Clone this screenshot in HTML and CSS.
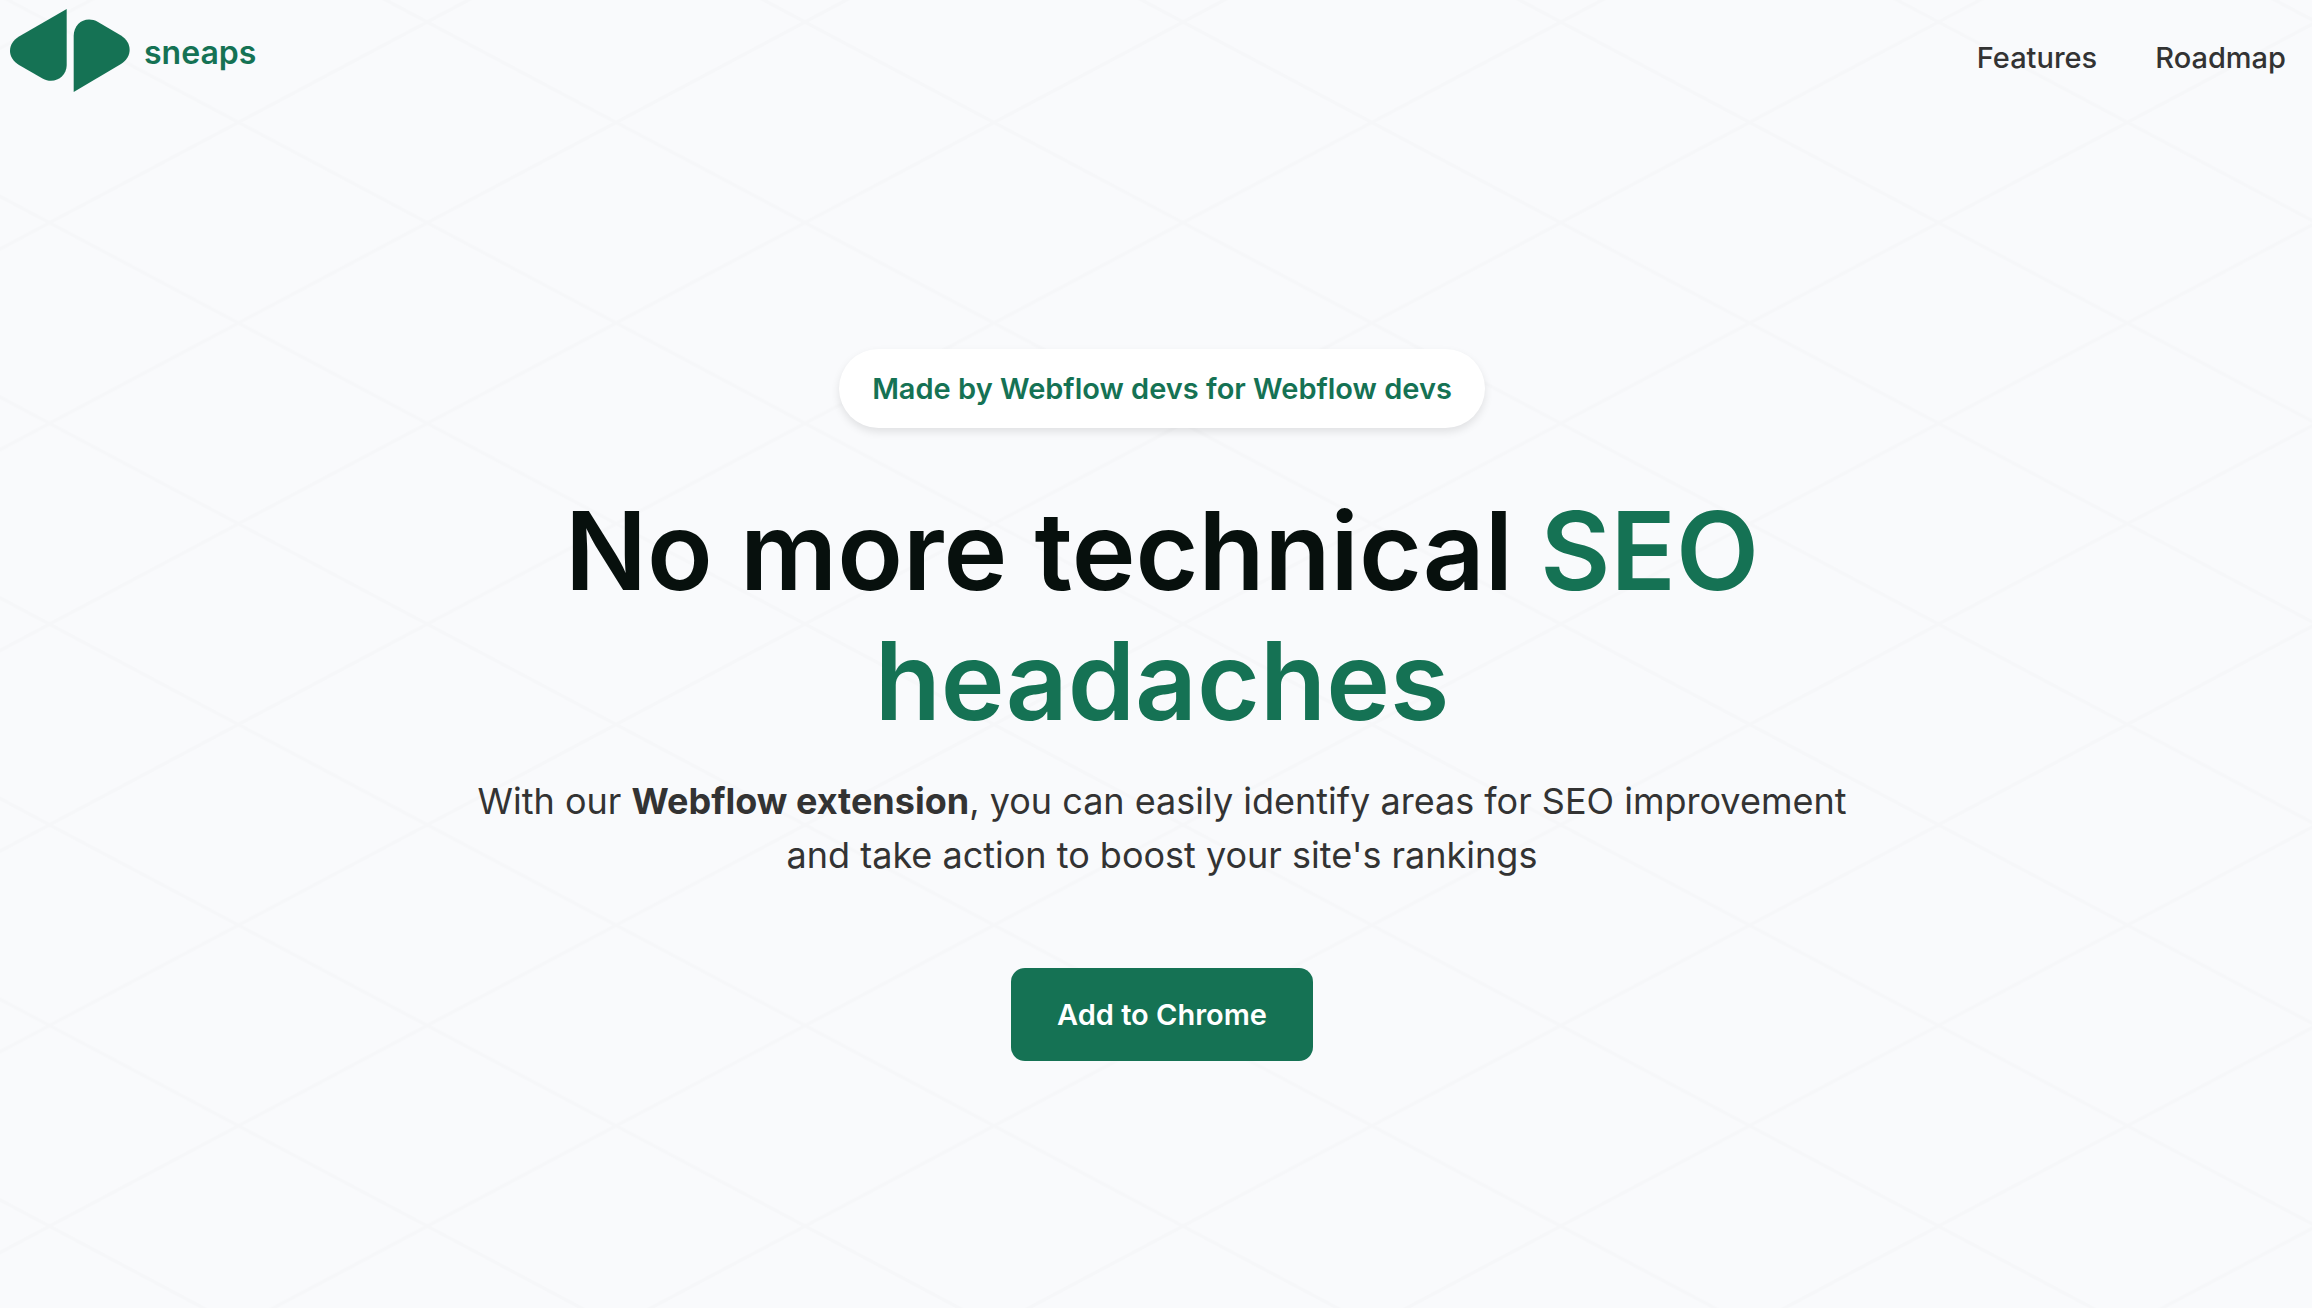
FILE: index.html
```html
<!DOCTYPE html>
<html lang="en">
<head>
    <meta charset="UTF-8">
    <meta name="viewport" content="width=device-width, initial-scale=1.0">
    <title>sneaps</title>
    <link rel="stylesheet" href="styles.css">
</head>
<body>
    <!-- background grid -->
    <svg class="page-grid" aria-hidden="true">
        <defs>
            <pattern id="grid" x="49.5" y="22" width="377.8" height="200.7" patternUnits="userSpaceOnUse">
                <path d="M-37.78 -20.07L415.58 220.77M-37.78 220.77L415.58 -20.07" />
            </pattern>
        </defs>
        <rect width="100%" height="100%" fill="url(#grid)" />
    </svg>

    <header class="header">
        <a href="#" class="logo">
            <svg class="logo-mark" viewBox="0 0 120 84" aria-hidden="true">
                <path d="M56.7 0V56C56.7 68 44 76 32.5 69.500L9 56C-3 49 -3 34.500 9 27.500Z" />
                <path d="M63.700 83V27C63.700 14 76 6.500 88 13L111 26.500C122.500 33.500 122.500 48 111 55Z" />
            </svg>
            <span>sneaps</span>
        </a>
        <nav class="nav">
            <a href="#features">Features</a>
            <a href="#roadmap">Roadmap</a>
        </nav>
    </header>

    <main class="hero">
        <p class="hero-badge">Made by Webflow devs for Webflow devs</p>
        <h1 class="hero-title">No more technical <span>SEO headaches</span></h1>
        <p class="hero-text">With our <strong>Webflow extension</strong>, you can easily identify areas for SEO improvement and take action to boost your site's rankings</p>
        <button type="button" class="hero-button">Add to Chrome</button>
    </main>
</body>
</html>
```
FILE: styles.css
```css
* {
    box-sizing: border-box;
}

body {
    margin: 0;
    min-height: 100vh;
    display: flex;
    flex-direction: column;
    position: relative;
    background-color: #f9fafc;
    color: #333333;
    font-family: Inter, "Liberation Sans", sans-serif;
    font-size: 29px;
    line-height: 35px;
}

h1,
p {
    margin: 0;
}

a {
    color: inherit;
    text-decoration: none;
}

.page-grid {
    position: absolute;
    top: 0;
    left: 0;
    width: 100%;
    height: 100%;
    z-index: -1;
}

.page-grid path {
    fill: none;
    stroke: #000000;
    stroke-opacity: .01;
    stroke-width: 3;
}

.header {
    display: flex;
    justify-content: space-between;
    align-items: center;
    height: 102px;
    padding: 0 26px 0 10px;
}

.logo {
    display: flex;
    align-items: center;
    gap: 14px;
    color: #157254;
    font-size: 32px;
    font-weight: 600;
}

.logo span {
    padding-top: 2px;
}

.logo-mark {
    width: 120px;
    height: 84px;
    fill: #157254;
}

.nav {
    display: flex;
    gap: 58px;
    padding-top: 12px;
    font-weight: 500;
}

.hero {
    flex: 1;
    display: flex;
    flex-direction: column;
    align-items: center;
    justify-content: center;
    padding-left: 12px;
    text-align: center;
}

.hero-badge {
    padding: 22px 33px;
    border-radius: 40px;
    background-color: #ffffff;
    box-shadow: 0 4px 8px rgba(0, 0, 0, .1);
    color: #157254;
    font-weight: 600;
}

.hero-title {
    max-width: 1400px;
    margin-top: 58px;
    color: #07100d;
    font-size: 108px;
    font-weight: 600;
    line-height: 130px;
}

.hero-title span {
    color: #157254;
}

.hero-text {
    max-width: 1400px;
    margin-top: 28px;
    font-size: 36px;
    line-height: 54px;
}

.hero-button {
    margin-top: 86px;
    padding: 29px 46px;
    border: none;
    border-radius: 14px;
    background-color: #157254;
    color: #ffffff;
    font-family: inherit;
    font-size: 29px;
    font-weight: 600;
    line-height: 35px;
    cursor: pointer;
}
```
